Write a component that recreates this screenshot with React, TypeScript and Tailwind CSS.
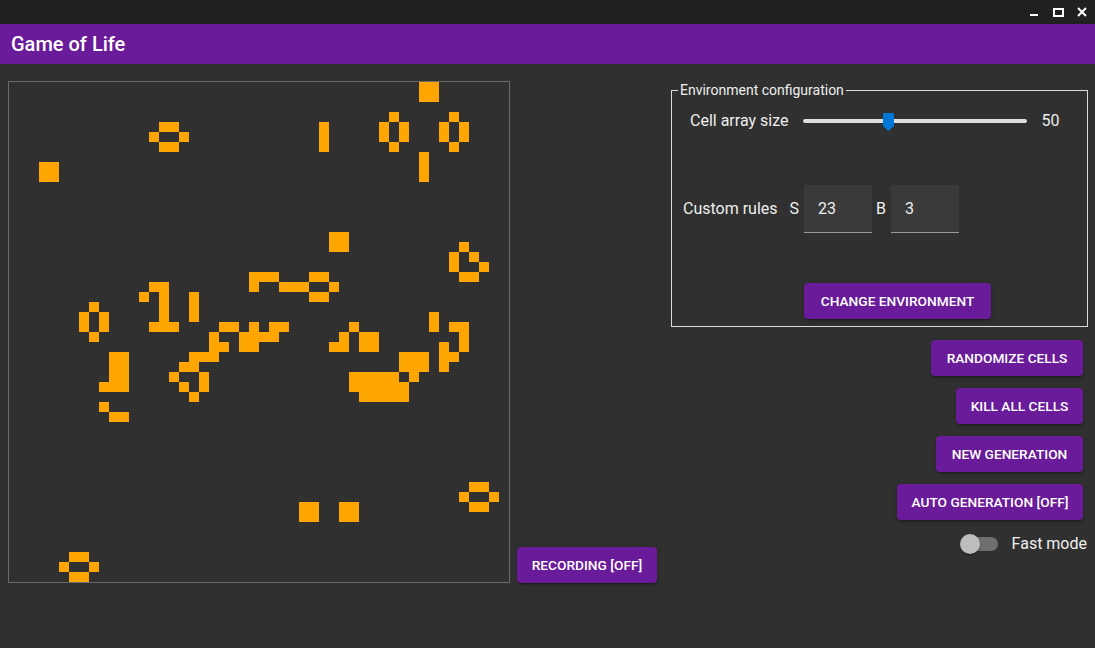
import React from 'react';

const LIVE: Record<number, number[]> = {
  0: [41, 42],
  1: [41, 42],
  3: [38, 44],
  4: [15, 16, 31, 37, 39, 43, 45],
  5: [14, 17, 31, 37, 39, 43, 45],
  6: [15, 16, 31, 38, 44],
  7: [41],
  8: [3, 4, 41],
  9: [3, 4, 41],
  15: [32, 33],
  16: [32, 33, 45],
  17: [44, 46],
  18: [44, 47],
  19: [24, 25, 26, 30, 31, 45, 46],
  20: [14, 15, 24, 27, 28, 29, 32],
  21: [13, 15, 18, 30, 31],
  22: [8, 15, 18],
  23: [7, 9, 15, 18, 42],
  24: [7, 9, 14, 15, 16, 21, 22, 24, 26, 27, 34, 42, 44, 45],
  25: [8, 20, 23, 24, 25, 26, 33, 35, 36, 45],
  26: [20, 21, 23, 24, 32, 33, 35, 36, 43, 45],
  27: [10, 11, 18, 19, 20, 39, 40, 41, 43, 44],
  28: [10, 11, 17, 18, 39, 40, 41, 43],
  29: [10, 11, 16, 19, 34, 35, 36, 37, 38, 40],
  30: [9, 10, 11, 17, 19, 34, 35, 36, 37, 38, 39],
  31: [18, 35, 36, 37, 38, 39],
  32: [9],
  33: [10, 11],
  40: [46, 47],
  41: [45, 48],
  42: [29, 30, 33, 34, 46, 47],
  43: [29, 30, 33, 34],
  47: [6, 7],
  48: [5, 8],
  49: [6, 7],
};

const CELL = 10;

function Board() {
  const rects: React.ReactNode[] = [];
  Object.entries(LIVE).forEach(([row, cols]) => {
    cols.forEach((col) => {
      rects.push(
        <rect
          key={`${row}-${col}`}
          x={col * CELL}
          y={Number(row) * CELL}
          width={CELL}
          height={CELL}
          fill="#ffa500"
        />
      );
    });
  });
  return (
    <div className="h-[502px] w-[502px] border border-[#6b6b6b]">
      <svg width="500" height="500" viewBox="0 0 500 500" shapeRendering="crispEdges" className="block">
        {rects}
      </svg>
    </div>
  );
}

const btn =
  'h-9 shrink-0 whitespace-nowrap rounded px-0 bg-[#6a1b9a] text-[13.7px] font-medium uppercase text-white shadow-[0_3px_1px_-2px_rgba(0,0,0,0.2),0_2px_2px_0_rgba(0,0,0,0.14),0_1px_5px_0_rgba(0,0,0,0.12)]';

function RuleInput({ value }: { value: string }) {
  return (
    <div className="flex h-12 w-[68px] items-center border-b border-[#9a9a9a] bg-[#3a3a3a] pl-[14px] text-base text-[#eeeeee]">
      {value}
    </div>
  );
}

export default function App() {
  return (
    <div className="flex h-[648px] w-[1095px] flex-col overflow-hidden bg-[#303030] font-['Roboto','Liberation_Sans',sans-serif] text-[#eeeeee]">
      {/* window chrome */}
      <div className="flex h-6 items-center justify-end bg-[#202020]">
        <div className="mr-[15px] mt-[5px] h-[2px] w-2 bg-white" />
        <div className="mr-[13px] h-[9px] w-[11px] border-2 border-white" />
        <svg width="10" height="10" viewBox="0 0 10 10" className="mr-2">
          <path d="M1 1 L9 9 M9 1 L1 9" stroke="white" strokeWidth="2" />
        </svg>
      </div>

      <header className="flex h-10 items-center bg-[#6a1b9a] px-[11px] text-xl font-medium text-white">
        Game of Life
      </header>

      <main className="flex justify-between pl-2 pr-[7px] pt-[17px]">
        <div className="flex items-end gap-[7px]">
          <Board />
          <button className={`${btn} w-[140px]`}>Recording [OFF]</button>
        </div>

        <div className="-mt-px flex w-[417px] flex-col items-end">
          <fieldset className="w-full border border-[#dcdcdc] pb-[7px]">
            <legend className="ml-[6px] px-[2px] text-sm leading-5">Environment configuration</legend>

            <div className="flex h-10 items-center pl-[18px] pt-[2px]">
              <span className="text-base">Cell array size</span>
              <div className="relative ml-[15px] flex h-5 w-[224px] items-center">
                <div className="h-1 w-full rounded-full bg-[#dedede]" />
                <svg
                  width="11"
                  height="18"
                  viewBox="0 0 11 18"
                  className="absolute left-[80px] top-[2px]"
                >
                  <path d="M0 1 Q0 0 1 0 H10 Q11 0 11 1 V13 L5.5 18 L0 13 Z" fill="#0078d7" />
                </svg>
              </div>
              <span className="ml-[14px] text-base">50</span>
            </div>

            <div className="mt-[45px] flex items-center pl-[11px] text-base">
              <span>Custom rules</span>
              <span className="ml-[12px]">S</span>
              <div className="ml-[5px]">
                <RuleInput value="23" />
              </div>
              <span className="ml-[4px]">B</span>
              <div className="ml-[5px]">
                <RuleInput value="3" />
              </div>
            </div>

            <div className="mt-[50px] pl-[132px]">
              <button className={`${btn} w-[187px]`}>Change environment</button>
            </div>
          </fieldset>

          <div className="mr-[5px] mt-[13px] flex flex-col items-end gap-3">
            <button className={`${btn} w-[152px]`}>Randomize cells</button>
            <button className={`${btn} w-[127px]`}>Kill all cells</button>
            <button className={`${btn} w-[147px]`}>New generation</button>
            <button className={`${btn} w-[186px]`}>Auto generation [OFF]</button>
          </div>

          <div className="mt-[5px] flex h-[38px] items-center">
            <div className="relative flex h-[38px] w-[40px] items-center">
              <div className="ml-[4px] h-[14px] w-[34px] rounded-full bg-[#6f6f6f]" />
              <div className="absolute left-0 top-[9px] h-5 w-5 rounded-full bg-[#bdbdbd] shadow-[0_2px_1px_-1px_rgba(0,0,0,0.2),0_1px_1px_0_rgba(0,0,0,0.14),0_1px_3px_0_rgba(0,0,0,0.12)]" />
            </div>
            <span className="ml-[12px] mr-px text-base">Fast mode</span>
          </div>
        </div>
      </main>
    </div>
  );
}
